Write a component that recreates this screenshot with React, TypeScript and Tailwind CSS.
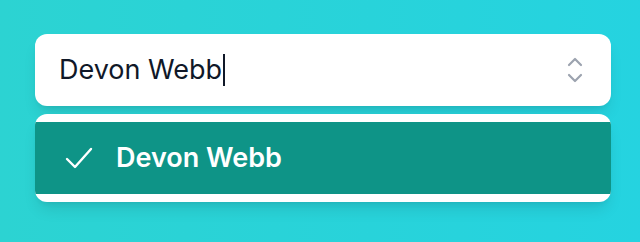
export default function App() {
  return (
    <div
      className="min-h-[242px] w-full bg-gradient-to-r from-[#2cd3d2] to-[#25d3e0] pl-[35px] pr-[29px] pt-[34px]"
      style={{ fontFamily: 'Inter, "Noto Sans", sans-serif' }}
    >
      <div className="flex h-[72px] items-center justify-between rounded-xl bg-white pl-6 pr-7 shadow-lg shadow-black/10">
        <div className="flex items-center text-[27px] text-gray-900">
          <span>Devon Webb</span>
          <span className="ml-px h-8 w-[2px] bg-gray-900" />
        </div>
        <svg width="16" height="26" viewBox="0 0 16 26" fill="none" stroke="#9ca3af" strokeWidth="2.2" strokeLinecap="round" strokeLinejoin="round">
          <path d="M2 8l6-6 6 6" />
          <path d="M2 18l6 6 6-6" />
        </svg>
      </div>
      <div className="mt-2 overflow-hidden rounded-xl bg-white py-2 shadow-lg shadow-black/10">
        <div className="flex h-[72px] items-center bg-[#0e9487] pl-[30px] text-white">
          <svg width="28" height="22" viewBox="0 0 28 22" fill="none" stroke="white" strokeWidth="2.4" strokeLinecap="round" strokeLinejoin="round">
            <path d="M2 12l8 8L26 2" />
          </svg>
          <span className="ml-[23px] text-[27px] font-semibold">Devon Webb</span>
        </div>
      </div>
    </div>
  )
}
